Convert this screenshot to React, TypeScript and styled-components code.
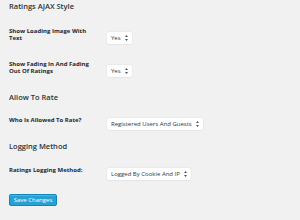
import React from 'react'
import styled, { createGlobalStyle } from 'styled-components'

const GlobalStyle = createGlobalStyle`
  html, body {
    margin: 0;
    padding: 0;
    background: #f1f1f1;
  }
  body {
    font-family: "Open Sans", "Liberation Sans", sans-serif;
    color: #23282d;
  }
`

const Wrap = styled.div`
  width: 300px;
  height: 220px;
  padding: 0 9px;
  box-sizing: border-box;
  overflow: hidden;
`

const SectionTitle = styled.h2<{ $top: number }>`
  margin: ${({ $top }) => $top}px 0 0;
  font-size: 7.5px;
  line-height: 10px;
  font-weight: 600;
  color: #2c3136;
`

const Row = styled.div<{ $top: number }>`
  display: flex;
  align-items: center;
  margin-top: ${({ $top }) => $top}px;
`

const Label = styled.div`
  width: 88px;
  margin-right: 10px;
  font-size: 6px;
  line-height: 7.5px;
  font-weight: 700;
  color: #23282d;
`

const Select = styled.div`
  display: inline-flex;
  align-items: center;
  height: 12px;
  margin-top: 6px;
  padding: 0 4px;
  background: #fff;
  border-radius: 2px;
  box-shadow: 0 0 0 0.5px #e4e4e4, 0 1px 1px rgba(0, 0, 0, 0.04);
  font-size: 6px;
  color: #32373c;
  box-sizing: border-box;
  gap: 4px;
  white-space: nowrap;
`

const Arrows = styled.svg`
  width: 3px;
  height: 6px;
`

const SaveButton = styled.button`
  margin-top: 14px;
  height: 12px;
  width: 48px;
  padding: 0;
  border: 1px solid #1186bb;
  border-radius: 2px;
  background: #26a1d5;
  color: #fff;
  font-family: "Open Sans", "Liberation Sans", sans-serif;
  font-size: 6px;
  line-height: 10px;
  display: block;
  box-shadow: inset 0 1px 0 rgba(120, 200, 230, 0.5);
`

const Choice: React.FC<{ value: string }> = ({ value }) => (
  <Select>
    {value}
    <Arrows viewBox="0 0 3 6">
      <path d="M1.5 0 L3 2 L0 2 Z M1.5 6 L3 4 L0 4 Z" fill="#555" />
    </Arrows>
  </Select>
)

export default function App() {
  return (
    <Wrap>
      <GlobalStyle />
      <SectionTitle $top={1}>Ratings AJAX Style</SectionTitle>
      <Row $top={15}>
        <Label>Show Loading Image With Text</Label>
        <Choice value="Yes" />
      </Row>
      <Row $top={15}>
        <Label>Show Fading In And Fading Out Of Ratings</Label>
        <Choice value="Yes" />
      </Row>
      <SectionTitle $top={15}>Allow To Rate</SectionTitle>
      <Row $top={10}>
        <Label>Who Is Allowed To Rate?</Label>
        <Choice value="Registered Users And Guests" />
      </Row>
      <SectionTitle $top={11}>Logging Method</SectionTitle>
      <Row $top={11}>
        <Label>Ratings Logging Method:</Label>
        <Choice value="Logged By Cookie And IP" />
      </Row>
      <SaveButton>Save Changes</SaveButton>
    </Wrap>
  )
}
